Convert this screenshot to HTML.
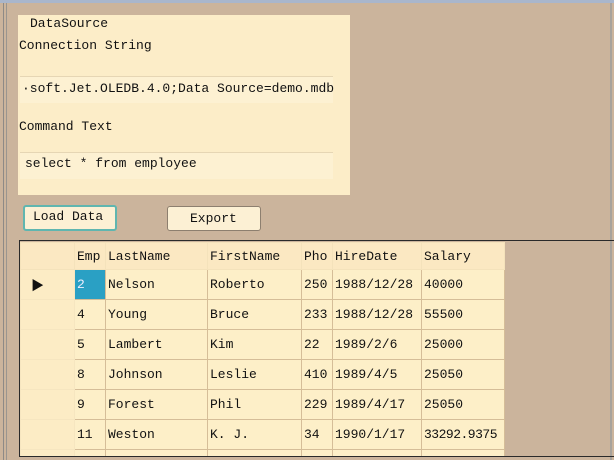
<!DOCTYPE html>
<html><head><style>
html,body{margin:0;width:614px;height:460px;overflow:hidden}
body{background:#cbb49c;position:relative;font-family:"Liberation Mono","Noto Sans CJK SC",monospace;font-size:13px;color:#111}
.a{position:absolute}
.t{position:absolute;white-space:nowrap}
table{border-collapse:collapse;position:absolute;left:0;top:1px;table-layout:fixed}
td{border:1px solid #d5bd98;padding:0 0 0 2px;height:30px;background:#fdefc8;white-space:nowrap;overflow:hidden;font-size:13px;box-sizing:border-box}
tr.h td{height:27px;border-color:#f4e2bb;background:#fbe8c2}
td.rh{background:#fcecc5;border-color:#f6e6c0}
</style></head><body>
<div class="a" style="left:0;top:0;width:614px;height:3px;background:#a9b6cc"></div>
<div class="a" style="left:3px;top:3px;width:1px;height:457px;background:#8e8a86"></div>
<div class="a" style="left:6px;top:3px;width:1px;height:457px;background:#9a958f"></div>
<div class="a" style="left:610px;top:3px;width:2px;height:457px;background:#a8a39c"></div>
<div class="a" style="left:18px;top:15px;width:332px;height:180px;background:#fcedc8"></div>
<div class="t" style="left:30px;top:16px">DataSource</div>
<div class="t" style="left:19px;top:38px">Connection String</div>
<div class="a" style="left:20px;top:76px;width:313px;height:26px;background:#fdf1d2;border-top:1px solid #e6d6b4"></div>
<div class="t" style="left:22px;top:81px">·soft.Jet.OLEDB.4.0;Data Source=demo.mdb</div>
<div class="t" style="left:19px;top:119px">Command Text</div>
<div class="a" style="left:20px;top:152px;width:313px;height:26px;background:#fdf1d2;border-top:1px solid #e6d6b4"></div>
<div class="t" style="left:25px;top:156px">select * from employee</div>
<div class="a" style="left:23px;top:205px;width:90px;height:22px;border:2px solid #5fb6b0;border-radius:3px;background:#fcf0d4"></div>
<div class="t" style="left:33px;top:209px">Load Data</div>
<div class="a" style="left:167px;top:206px;width:92px;height:23px;border:1px solid #8d7f6f;border-radius:3px;background:#fcf0d4"></div>
<div class="t" style="left:190px;top:211px">Export</div>
<div class="a" style="left:19px;top:240px;width:595px;height:217px;border:1px solid #2a2a2a;border-right:none;box-sizing:border-box;overflow:hidden">
<table>
<colgroup><col style="width:54px"><col style="width:31px"><col style="width:102px"><col style="width:94px"><col style="width:31px"><col style="width:89px"><col style="width:83px"></colgroup>
<tr class="h"><td class="rh"></td><td>Emp</td><td>LastName</td><td>FirstName</td><td>Pho</td><td>HireDate</td><td>Salary</td></tr>
<tr><td class="rh" style="padding-left:10px">▶</td><td style="background:#2aa0c4;color:#eef">2</td><td>Nelson</td><td>Roberto</td><td>250</td><td>1988/12/28</td><td>40000</td></tr>
<tr><td class="rh"></td><td>4</td><td>Young</td><td>Bruce</td><td>233</td><td>1988/12/28</td><td>55500</td></tr>
<tr><td class="rh"></td><td>5</td><td>Lambert</td><td>Kim</td><td>22</td><td>1989/2/6</td><td>25000</td></tr>
<tr><td class="rh"></td><td>8</td><td>Johnson</td><td>Leslie</td><td>410</td><td>1989/4/5</td><td>25050</td></tr>
<tr><td class="rh"></td><td>9</td><td>Forest</td><td>Phil</td><td>229</td><td>1989/4/17</td><td>25050</td></tr>
<tr><td class="rh"></td><td>11</td><td>Weston</td><td>K. J.</td><td>34</td><td>1990/1/17</td><td style="letter-spacing:-0.5px">33292.9375</td></tr>
<tr><td class="rh"></td><td></td><td></td><td></td><td></td><td></td><td></td></tr>
</table>
</div>
</body></html>
